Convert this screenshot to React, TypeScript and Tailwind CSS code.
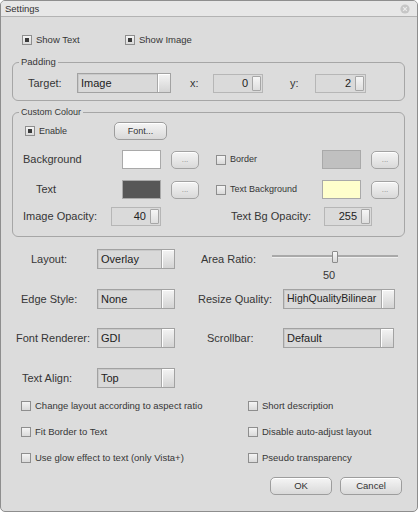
import React from 'react'

// Fenêtre "Settings" façon skin gris clair

const FONT = "font-['Liberation_Sans',Arial,sans-serif]"

function CheckBox({ label, checked = false, small = false }: { label: string; checked?: boolean; small?: boolean }) {
  return (
    <div className="flex items-center h-[12px]">
      <span className="w-[10px] h-[10px] shrink-0 border border-[#8e8e8e] bg-linear-to-b from-[#f4f4f4] to-[#dadada] flex items-center justify-center">
        {checked && <span className="w-[4px] h-[4px] bg-[#3a3a3a]" />}
      </span>
      <span className={`ml-[4px] leading-none whitespace-nowrap ${small ? 'text-[9px]' : 'text-[9.5px]'}`}>{label}</span>
    </div>
  )
}

function Combo({ value, width, text = 'text-[11px]' }: { value: string; width: string; text?: string }) {
  return (
    <div className={`flex h-[20px] border border-[#a2a2a2] bg-[#d9d9d9] ${width}`}>
      <div className={`flex-1 flex items-center pl-[3px] ${text} text-[#222] whitespace-nowrap overflow-hidden shadow-[inset_1px_1px_0_#c9c9c9]`}>
        {value}
      </div>
      <div className="w-[13px] border-l border-[#a8a8a8] bg-linear-to-b from-[#f4f4f4] to-[#d4d4d4] shadow-[inset_1px_1px_0_#ffffff]" />
    </div>
  )
}

function Spin({ value, width }: { value: string; width: string }) {
  return (
    <div className={`flex items-center h-[19px] border border-[#b6b6b6] bg-[#dadada] ${width}`}>
      <span className="flex-1 text-right pr-[4px] text-[11px] text-[#222]">{value}</span>
      <span className="w-[9px] h-[15px] mr-[1px] border border-[#a6a6a6] rounded-[1px] bg-linear-to-b from-[#f6f6f6] to-[#dedede]" />
    </div>
  )
}

function Btn({ label, width, text = 'text-[9.5px]' }: { label: string; width: string; text?: string }) {
  return (
    <button
      className={`flex items-center justify-center ${width} h-[18px] rounded-[5px] border border-[#9d9d9d] bg-linear-to-b from-[#f5f5f5] to-[#d9d9d9] shadow-[inset_0_1px_0_#ffffff] ${text} text-[#333] leading-none`}
    >
      {label}
    </button>
  )
}

function Swatch({ color }: { color: string }) {
  return <span className={`w-[39px] h-[19px] border border-[#a9a9a9] ${color}`} />
}

function Dots() {
  return (
    <button className="ml-[10px] w-[28px] h-[18px] rounded-[5px] border border-[#a3a3a3] bg-linear-to-b from-[#f5f5f5] to-[#d9d9d9] shadow-[inset_0_1px_0_#ffffff] text-[8px] text-[#888] leading-none flex items-center justify-center">
      ...
    </button>
  )
}

export default function App() {
  return (
    <div className={`w-[418px] h-[512px] bg-[#dcdcdc] border border-[#8e8e8e] rounded-[5px] overflow-hidden text-[#363636] ${FONT}`}>
      {/* Barre de titre */}
      <div className="h-[16px] border-b border-[#b3b3b3] bg-[#e7e7e7] flex items-center justify-between pl-[4px] pr-[7px]">
        <span className="text-[9.5px] leading-none text-[#333]">Settings</span>
        <svg width="10" height="10" viewBox="0 0 10 10">
          <circle cx="5" cy="5" r="4.6" fill="#c6c6c6" />
          <path d="M3.2 3.2 L6.8 6.8 M6.8 3.2 L3.2 6.8" stroke="#ececec" strokeWidth="1.2" />
        </svg>
      </div>

      <div className="pt-[17px]">
        {/* Show text / image */}
        <div className="flex pl-[21px]">
          <div className="w-[103px]">
            <CheckBox label="Show Text" checked />
          </div>
          <CheckBox label="Show Image" checked />
        </div>

        {/* Padding */}
        <fieldset className="mt-[10px] ml-[11px] w-[393px] border border-[#a6a6a6] rounded-[6px] pt-[5px] pb-[7px]">
          <legend className="ml-[6px] px-[2px] h-[12px] text-[9.5px] leading-[12px]">Padding</legend>
          <div className="flex items-center">
            <span className="ml-[15px] w-[49px] text-[11px]">Target:</span>
            <Combo value="Image" width="w-[94px]" />
            <span className="ml-[19px] w-[23px] text-[11px]">x:</span>
            <Spin value="0" width="w-[50px]" />
            <span className="ml-[27px] w-[25px] text-[11px]">y:</span>
            <Spin value="2" width="w-[51px]" />
          </div>
        </fieldset>

        {/* Custom Colour */}
        <fieldset className="mt-[5px] ml-[11px] w-[393px] border border-[#a6a6a6] rounded-[6px] pt-[4px] pb-[10px]">
          <legend className="ml-[6px] px-[2px] h-[12px] text-[9px] leading-[12px]">Custom Colour</legend>
          <div className="flex items-center h-[18px]">
            <div className="ml-[12px] w-[89px]">
              <CheckBox label="Enable" checked small />
            </div>
            <Btn label="Font..." width="w-[53px]" text="text-[9px]" />
          </div>

          <div className="flex items-center h-[19px] mt-[10px]">
            <span className="ml-[10px] w-[99px] text-[11px]">Background</span>
            <Swatch color="bg-white" />
            <Dots />
            <div className="ml-[17px] w-[106px]">
              <CheckBox label="Border" small />
            </div>
            <Swatch color="bg-[#c0c0c0]" />
            <Dots />
          </div>

          <div className="flex items-center h-[19px] mt-[11px]">
            <span className="ml-[23px] w-[86px] text-[11px]">Text</span>
            <Swatch color="bg-[#575757]" />
            <Dots />
            <div className="ml-[17px] w-[106px]">
              <CheckBox label="Text Background" small />
            </div>
            <Swatch color="bg-[#ffffcc]" />
            <Dots />
          </div>

          <div className="flex items-center h-[19px] mt-[8px]">
            <span className="ml-[10px] w-[88px] text-[11px] whitespace-nowrap">Image Opacity:</span>
            <Spin value="40" width="w-[50px]" />
            <span className="ml-[70px] w-[93px] text-[11px] whitespace-nowrap">Text Bg Opacity:</span>
            <Spin value="255" width="w-[48px]" />
          </div>
        </fieldset>

        {/* Options d'affichage */}
        <div className="flex items-start mt-[12px]">
          <div className="w-[96px] h-[20px] flex items-center pl-[30px] text-[11px]">Layout:</div>
          <Combo value="Overlay" width="w-[78px]" />
          <div className="w-[97px] h-[20px] flex items-center pl-[26px] text-[11px]">Area Ratio:</div>
          <div className="w-[126px] flex flex-col">
            <div className="relative h-[14px]">
              <div className="absolute left-0 right-0 top-[6px] h-[2px] bg-[#a9a9a9] shadow-[0_1px_0_#efefef]" />
              <div className="absolute left-[60px] top-[2px] w-[6px] h-[12px] rounded-[1px] border border-[#8c8c8c] bg-linear-to-b from-[#f8f8f8] to-[#d8d8d8]" />
            </div>
            <span className="mt-[6px] pl-[51px] h-[12px] text-[11px] leading-[12px]">50</span>
          </div>
        </div>

        <div className="flex items-center mt-[8px]">
          <div className="w-[96px] pl-[20px] text-[11px]">Edge Style:</div>
          <Combo value="None" width="w-[78px]" />
          <div className="w-[108px] pl-[23px] text-[11px] whitespace-nowrap">Resize Quality:</div>
          <Combo value="HighQualityBilinear" width="w-[112px]" text="text-[10.5px]" />
        </div>

        <div className="flex items-center mt-[19px]">
          <div className="w-[96px] pl-[15px] text-[11px] whitespace-nowrap">Font Renderer:</div>
          <Combo value="GDI" width="w-[78px]" />
          <div className="w-[108px] pl-[32px] text-[11px]">Scrollbar:</div>
          <Combo value="Default" width="w-[111px]" />
        </div>

        <div className="flex items-center mt-[20px]">
          <div className="w-[96px] pl-[21px] text-[11px]">Text Align:</div>
          <Combo value="Top" width="w-[78px]" />
        </div>

        {/* Cases à cocher */}
        <div className="flex pl-[20px] mt-[12px]">
          <div className="w-[227px]">
            <CheckBox label="Change layout according to aspect ratio" />
          </div>
          <CheckBox label="Short description" />
        </div>
        <div className="flex pl-[20px] mt-[14px]">
          <div className="w-[227px]">
            <CheckBox label="Fit Border to Text" />
          </div>
          <CheckBox label="Disable auto-adjust layout" />
        </div>
        <div className="flex pl-[20px] mt-[14px]">
          <div className="w-[227px]">
            <CheckBox label="Use glow effect to text (only Vista+)" />
          </div>
          <CheckBox label="Pseudo transparency" />
        </div>

        {/* Boutons */}
        <div className="flex justify-end gap-[8px] pr-[15px] mt-[13px]">
          <Btn label="OK" width="w-[62px]" />
          <Btn label="Cancel" width="w-[62px]" />
        </div>
      </div>
    </div>
  )
}
